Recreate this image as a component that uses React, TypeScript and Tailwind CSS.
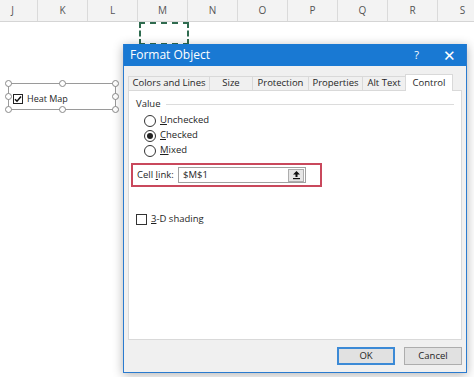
import React from "react";

const columns = ["J", "K", "L", "M", "N", "O", "P", "Q", "R", "S"];

function Handle() {
  return <div className="w-[7px] h-[7px] rounded-full border border-[#8a8a8a] bg-white" />;
}

function Radio({ checked, label, hot }: { checked?: boolean; label: string; hot: string }) {
  return (
    <div className="flex items-center gap-[4px] h-[15px]">
      <div className="w-[12px] h-[12px] rounded-full border border-[#333] bg-white flex items-center justify-center">
        {checked && <div className="w-[6px] h-[6px] rounded-full bg-[#222]" />}
      </div>
      <span>
        <span className="underline">{hot}</span>
        {label.slice(hot.length)}
      </span>
    </div>
  );
}

function PickerIcon() {
  return (
    <svg width="9" height="10" viewBox="0 0 9 10">
      <path d="M4.5 1 L8 4.5 L5.5 4.5 L5.5 7 L3.5 7 L3.5 4.5 L1 4.5 Z" fill="#111" />
      <rect x="1" y="8" width="7" height="1.2" fill="#111" />
    </svg>
  );
}

function FormatDialog() {
  const tabs = [
    { label: "Colors and Lines", w: "w-[82px]" },
    { label: "Size", w: "w-[44px]" },
    { label: "Protection", w: "w-[57px]" },
    { label: "Properties", w: "w-[55px]" },
    { label: "Alt Text", w: "w-[44px]" },
  ];

  return (
    <div className="absolute left-[123px] top-[44px] w-[344px] h-[329px] flex flex-col bg-[#f0f0f0] border border-t-0 border-[#2a7bcf] shadow-[0_2px_10px_rgba(0,0,0,0.3)]">
      {/* title bar */}
      <div className="h-[22px] bg-[#1979d3] flex items-center text-white pl-[6px] pr-[10px]">
        <span className="text-[12px]">Format Object</span>
        <span className="ml-auto text-[11px] mr-[24px]">?</span>
        <span className="text-[15px] leading-none font-light">✕</span>
      </div>

      {/* tabs */}
      <div className="mx-[4px] mt-[7px] flex items-end h-[17px] text-[9.5px]">
        {tabs.map((t) => (
          <div
            key={t.label}
            className={`${t.w} h-[14px] flex items-center justify-center border border-b-0 border-[#d9d9d9] -mr-px bg-[#f0f0f0]`}
          >
            {t.label}
          </div>
        ))}
        <div className="w-[48px] h-[17px] flex items-center justify-center border border-b-0 border-[#d9d9d9] bg-white relative z-10 -mb-px">
          Control
        </div>
      </div>

      {/* panel */}
      <div className="mx-[4px] h-[250px] bg-white border border-[#d9d9d9] px-[7px] pt-[6px] text-[9.5px]">
        <div className="flex items-center gap-[5px] h-[14px]">
          <span>Value</span>
          <div className="flex-1 h-px bg-[#dcdcdc]" />
        </div>
        <div className="pl-[8px] mt-[2px] flex flex-col">
          <Radio label="Unchecked" hot="U" />
          <Radio label="Checked" hot="C" checked />
          <Radio label="Mixed" hot="M" />
        </div>

        <div className="mt-[5px] -ml-[5px] w-[191px] h-[24px] border-2 border-[#c9485c] flex items-center pl-[4px]">
          <span className="w-[41px]">
            Cell <span className="underline">l</span>ink:
          </span>
          <div className="w-[128px] h-[16px] border border-[#a0a0a0] flex items-center pl-[4px]">
            <span>$M$1</span>
            <div className="ml-auto mr-[1px] w-[16px] h-[13px] bg-[#e6e6e6] border border-[#adadad] flex items-center justify-center">
              <PickerIcon />
            </div>
          </div>
        </div>

        <div className="mt-[25px] flex items-center gap-[4px]">
          <div className="w-[11px] h-[11px] border border-[#333] bg-white" />
          <span>
            <span className="underline">3</span>-D shading
          </span>
        </div>
      </div>

      {/* buttons */}
      <div className="flex justify-end gap-[9px] pr-[4px] mt-[7px] text-[9.5px]">
        <div className="w-[58px] h-[18px] border-2 border-[#3c8ad6] bg-[#e1e1e1] flex items-center justify-center">
          OK
        </div>
        <div className="w-[58px] h-[18px] border border-[#adadad] bg-[#e1e1e1] flex items-center justify-center">
          Cancel
        </div>
      </div>
    </div>
  );
}

export default function App() {
  return (
    <div className="relative w-[474px] h-[377px] overflow-hidden bg-white font-['Open_Sans',sans-serif] text-[#1f1f1f]">
      {/* column headers */}
      <div className="flex h-[22px] bg-[#f3f3f3] border-b border-[#d5d5d5] -ml-[12px]">
        {columns.map((c) => (
          <div
            key={c}
            className="w-[50px] shrink-0 flex items-center justify-center text-[10px] text-[#555] border-r border-[#dadada]"
          >
            {c}
          </div>
        ))}
      </div>

      {/* copied cell marquee */}
      <div className="absolute left-[139px] top-[22px] w-[50px] h-[23px] border-2 border-dashed border-[#2f6b4f]" />

      {/* checkbox form control, selected */}
      <div className="absolute left-[5px] top-[80px] w-[114px] h-[33px]">
        <div className="absolute left-[3px] top-[3px] right-[3px] bottom-[3px] border border-[#9a9a9a]" />
        <div className="absolute inset-0 flex flex-col justify-between">
          <div className="flex justify-between"><Handle /><Handle /><Handle /></div>
          <div className="flex justify-between"><Handle /><Handle /></div>
          <div className="flex justify-between"><Handle /><Handle /><Handle /></div>
        </div>
        <div className="absolute left-[8px] top-[12px] flex items-center gap-[4px] text-[9px]">
          <div className="w-[10px] h-[10px] border border-[#222] bg-white flex items-center justify-center">
            <svg width="8" height="8" viewBox="0 0 8 8">
              <path d="M1 4.2 L3 6.2 L7 1.5" stroke="#111" strokeWidth="1.5" fill="none" />
            </svg>
          </div>
          <span>Heat Map</span>
        </div>
      </div>

      <FormatDialog />
    </div>
  );
}
